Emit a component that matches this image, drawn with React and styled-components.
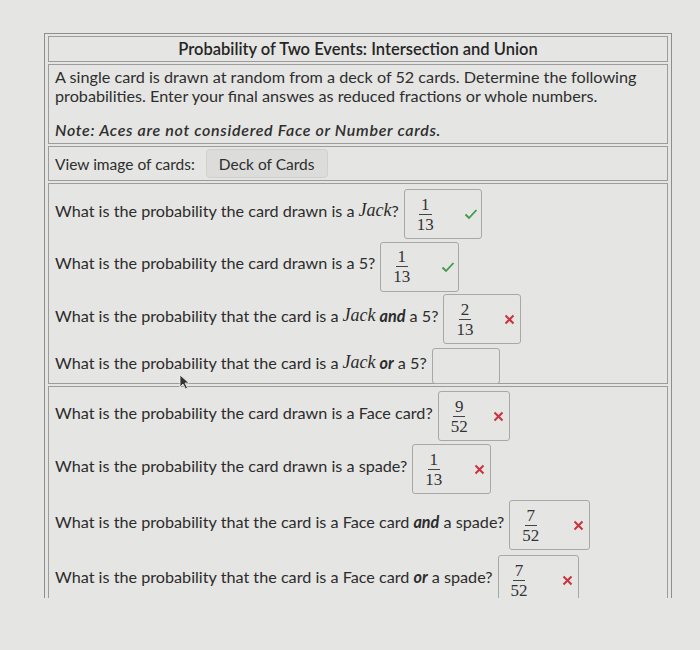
import React from 'react'
import styled, { createGlobalStyle } from 'styled-components'

const Global = createGlobalStyle`
    body {
        margin: 0;
        background: #e5e5e3;
        font-family: Lato, "Open Sans", sans-serif;
        color: #2e2e2e;
    }
`
const Page = styled.div`
    width: 700px;
    height: 650px;
    padding: 33px 0 0 44px;
    box-sizing: border-box;
    position: relative;
    overflow: hidden;
`
const Frame = styled.div`
    width: 628px;
    height: 565px;
    box-sizing: border-box;
    border: 1px solid #8e8e8e;
    border-bottom: none;
    padding: 2px 3px 0 3px;
    display: flex;
    flex-direction: column;
    gap: 2px;
    overflow: hidden;
`
const Cell = styled.div`
    border: 1px solid #9c9c9c;
    padding: ${p => p.$pad || '0 6px'};
    flex-shrink: 0;
`
const Title = styled(Cell)`
    height: 24px;
    display: flex;
    align-items: center;
    justify-content: center;
    font-size: 16.5px;
    font-weight: 600;
    color: #262626;
`
const Intro = styled.p`
    margin: 0;
    font-size: 16.2px;
    line-height: 19px;
`
const Note = styled.p`
    margin: 15px 0 0;
    font-size: 16px;
    font-style: italic;
    font-weight: 600;
    letter-spacing: 0.7px;
    line-height: 19px;
`
const ViewRow = styled(Cell)`
    height: 33px;
    display: flex;
    align-items: center;
    gap: 11px;
    font-size: 15.5px;
`
const DeckButton = styled.button`
    font: inherit;
    color: #2e2e2e;
    background: #dcdcda;
    border: 1px solid #d0d0ce;
    border-radius: 4px;
    height: 29px;
    padding: 0 12px;
`
const Block = styled(Cell)`
    display: flex;
    flex-direction: column;
`
const Row = styled.div`
    display: flex;
    align-items: center;
    height: ${p => p.$h || 53}px;
    font-size: 16.2px;
    color: #2c2c2c;
    white-space: nowrap;
`
const Mathi = styled.span`
    font-family: "Liberation Serif", serif;
    font-style: italic;
    font-size: 18px;
    margin-left: 4px;
`
const Em = styled.em`
    font-weight: 700;
    margin-left: 4px;
`
const Box = styled.div`
    margin: 4px 0 -4px 5px;
    flex-shrink: 0;
    box-sizing: border-box;
    width: ${p => p.$w || 79}px;
    height: ${p => (p.$empty ? 36 : 50)}px;
    border: 1px solid #a8a8a6;
    border-radius: 3px;
    display: flex;
    align-items: center;
    justify-content: space-between;
    padding: 0 ${p => (p.$ok ? 3 : 5)}px 0 12px;
`
const Frac = styled.span`
    display: inline-flex;
    flex-direction: column;
    align-items: center;
    font-family: "Liberation Serif", serif;
    font-size: 17px;
    line-height: 17px;
    color: #333;
`
const Num = styled.span`
    padding: 0 2px 1px;
    border-bottom: 1px solid #444;
`
const Den = styled.span`
    padding-top: 1px;
`
const Cursor = styled.svg`
    position: absolute;
    left: 179px;
    top: 374px;
`

const Check = () => (
    <svg width="14" height="12" viewBox="0 0 14 12">
        <path d="M1.5 6.5 L5 10 L12.5 2" fill="none" stroke="#3f9a46" strokeWidth="1.8" />
    </svg>
)
const Cross = () => (
    <svg width="11" height="11" viewBox="0 0 11 11">
        <path d="M1.5 1.5 L9.5 9.5 M9.5 1.5 L1.5 9.5" fill="none" stroke="#c9333c" strokeWidth="2" />
    </svg>
)

const Answer = ({ n, d, ok, w }) => (
    <Box $w={w} $ok={ok}>
        <Frac><Num>{n}</Num><Den>{d}</Den></Frac>
        {ok ? <Check /> : <Cross />}
    </Box>
)

const App = () => (
    <Page>
        <Global />
        <Frame>
            <Title>Probability of Two Events: Intersection and Union</Title>
            <Cell $pad="2px 6px 4px">
                <Intro>
                    A single card is drawn at random from a deck of 52 cards. Determine the following
                    probabilities. Enter your final answes as reduced fractions or whole numbers.
                </Intro>
                <Note>Note: Aces are not considered Face or Number cards.</Note>
            </Cell>
            <ViewRow>
                View image of cards:
                <DeckButton>Deck of Cards</DeckButton>
            </ViewRow>
            <Block>
                <Row $h={52}>
                    What is the probability the card drawn is a<Mathi>Jack</Mathi>?
                    <Answer n="1" d="13" w={78} ok />
                </Row>
                <Row>
                    What is the probability the card drawn is a 5?
                    <Answer n="1" d="13" ok />
                </Row>
                <Row $h={52}>
                    What is the probability that the card is a<Mathi>Jack</Mathi><Em>and</Em>&nbsp;a 5?
                    <Answer n="2" d="13" w={78} />
                </Row>
                <Row $h={42}>
                    What is the probability that the card is a<Mathi>Jack</Mathi><Em>or</Em>&nbsp;a 5?
                    <Box $w={68} $empty />
                </Row>
            </Block>
            <Block>
                <Row $h={50}>
                    What is the probability the card drawn is a Face card?
                    <Answer n="9" d="52" w={72} />
                </Row>
                <Row $h={56}>
                    What is the probability the card drawn is a spade?
                    <Answer n="1" d="13" />
                </Row>
                <Row $h={56}>
                    What is the probability that the card is a Face card<Em>and</Em>&nbsp;a spade?
                    <Answer n="7" d="52" w={81} />
                </Row>
                <Row $h={54}>
                    What is the probability that the card is a Face card<Em>or</Em>&nbsp;a spade?
                    <Answer n="7" d="52" w={81} />
                </Row>
            </Block>
        </Frame>
        <Cursor width="11" height="16" viewBox="0 0 11 16">
            <path d="M1 1 L1 13 L4 10 L6.5 15 L8.5 14 L6 9 L10 9 Z" fill="#333" stroke="#eee" strokeWidth="0.8" />
        </Cursor>
    </Page>
)

export default App
